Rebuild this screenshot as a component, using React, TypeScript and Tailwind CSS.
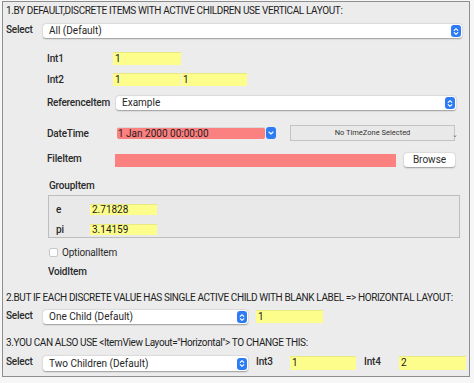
import React from "react";

const font = "font-['Roboto',_'Liberation_Sans',_sans-serif]";

function Stepper({ single = false }: { single?: boolean }) {
    return (
        <span className="flex h-[12px] w-[10px] shrink-0 items-center justify-center rounded-[3px] bg-[#2d7cf5]">
            {single ? (
                <svg width="6" height="4" viewBox="0 0 6 4" fill="none">
                    <path d="M1 1l2 2 2-2" stroke="white" strokeWidth="1.1" strokeLinecap="round" strokeLinejoin="round" />
                </svg>
            ) : (
                <svg width="6" height="9" viewBox="0 0 6 9" fill="none">
                    <path d="M1.2 3.3L3 1.6l1.8 1.7M1.2 5.7L3 7.4l1.8-1.7" stroke="white" strokeWidth="1.1" strokeLinecap="round" strokeLinejoin="round" />
                </svg>
            )}
        </span>
    );
}

function Select({ value, className }: { value: string; className: string }) {
    return (
        <div className={`flex h-[14px] items-center justify-between rounded-[3px] bg-white pl-[6px] pr-[1px] shadow-[0_0.5px_1.5px_rgba(0,0,0,0.35)] ${className}`}>
            <span className="text-[10px] leading-none text-[#262626]">{value}</span>
            <Stepper />
        </div>
    );
}

function Yellow({ value, className }: { value: string; className: string }) {
    return (
        <div className={`flex items-center bg-[#fdfd8c] pl-[2px] text-[10px] leading-none text-[#1a1a1a] shadow-[inset_0_1px_0_rgba(0,0,0,0.08)] ${className}`}>
            {value}
        </div>
    );
}

function Label({ children, className = "" }: { children: React.ReactNode; className?: string }) {
    return <span className={`text-[10px] font-medium leading-none tracking-[-0.2px] text-[#2a2a2a] ${className}`}>{children}</span>;
}

function Heading({ children, className = "" }: { children: React.ReactNode; className?: string }) {
    return (
        <div className={`flex items-center whitespace-nowrap text-[10px] leading-none tracking-[-0.38px] text-[#1e1e1e] ${className}`}>
            {children}
        </div>
    );
}

export default function App() {
    return (
        <div className={`h-[383px] w-[474px] overflow-hidden bg-[#f6f6f6] pl-[2px] pt-[1px] ${font}`}>
            <div className="flex h-[376px] w-[468px] flex-col border border-[#8e8e8e] bg-[#ececec] pl-[3px]">
                {/* Section 1 */}
                <Heading className="h-[17px]">1.BY DEFAULT,DISCRETE ITEMS WITH ACTIVE CHILDREN USE VERTICAL LAYOUT:</Heading>

                <div className="mt-[5px] flex h-[14px]">
                    <Label className="w-[37px] pt-[1px]">Select</Label>
                    <Select value="All (Default)" className="w-[419px]" />
                </div>

                <div className="ml-[41px] flex flex-col">
                    <div className="mt-[14px] flex h-[13px] items-center">
                        <Label className="w-[66px]">Int1</Label>
                        <Yellow value="1" className="h-[13px] w-[68px]" />
                    </div>

                    <div className="mt-[8px] flex h-[13px] items-center">
                        <Label className="w-[66px]">Int2</Label>
                        <Yellow value="1" className="h-[13px] w-[67px]" />
                        <Yellow value="1" className="ml-[1px] h-[13px] w-[66px]" />
                    </div>

                    <div className="mt-[10px] flex h-[14px] items-center">
                        <Label className="w-[69px]">ReferenceItem</Label>
                        <Select value="Example" className="w-[340px]" />
                    </div>

                    <div className="mt-[15px] flex h-[16px] items-center">
                        <Label className="w-[70px] pt-[2px]">DateTime</Label>
                        <div className="flex h-[12px] w-[148px] items-center rounded-[2px] border-t border-[#d9d9d9] bg-[#fb8181] pl-[1px] text-[10px] leading-none text-[#2a1a1a]">
                            1 Jan 2000 00:00:00
                        </div>
                        <span className="ml-[1px]">
                            <Stepper single />
                        </span>
                        <div className="relative ml-[14px] flex h-[16px] w-[165px] items-center justify-center border border-[#c4c4c4] bg-[#e9e9e9] text-[7.5px] leading-none text-[#333]">
                            No TimeZone Selected
                            <span className="absolute -right-[4px] bottom-[1px] text-[7px] leading-none text-[#666]">⌄</span>
                        </div>
                    </div>

                    <div className="mt-[12px] flex h-[15px]">
                        <Label className="w-[68px] pt-[1px]">FileItem</Label>
                        <div className="mt-[1px] h-[13px] w-[281px] bg-[#fb8181]" />
                        <div className="ml-[8px] flex h-[14px] w-[51px] items-center justify-center rounded-[3px] bg-white text-[10px] leading-none text-[#2a2a2a] shadow-[0_0.5px_1.5px_rgba(0,0,0,0.35)]">
                            Browse
                        </div>
                    </div>

                    <Label className="mt-[12px] ml-[2px] flex h-[12px] items-center">GroupItem</Label>

                    <div className="mt-[3px] ml-[1px] flex h-[43px] w-[412px] flex-col border border-[#bdbdbd] bg-[#e9e9e9] pl-[7px]">
                        <div className="mt-[8px] flex h-[11px] items-center">
                            <Label className="w-[34px]">e</Label>
                            <Yellow value="2.71828" className="h-[11px] w-[67px]" />
                        </div>
                        <div className="mt-[9px] flex h-[11px] items-center">
                            <Label className="w-[34px]">pi</Label>
                            <Yellow value="3.14159" className="h-[11px] w-[67px]" />
                        </div>
                    </div>

                    <div className="mt-[10px] flex h-[9px] items-center">
                        <span className="ml-[2px] h-[9px] w-[9px] rounded-[2px] border border-[#c8c8c8] bg-white" />
                        <Label className="ml-[4px] font-normal">OptionalItem</Label>
                    </div>

                    <Label className="mt-[10px] ml-[1px] flex h-[10px] items-center">VoidItem</Label>
                </div>

                {/* Section 2 */}
                <Heading className="mt-[15px] h-[12px]">
                    2.BUT IF EACH DISCRETE VALUE HAS SINGLE ACTIVE CHILD WITH BLANK LABEL =&gt; HORIZONTAL LAYOUT:
                </Heading>

                <div className="mt-[6px] flex h-[14px]">
                    <Label className="w-[37px] pt-[1px]">Select</Label>
                    <Select value="One Child (Default)" className="w-[205px]" />
                    <Yellow value="1" className="ml-[8px] h-[13px] w-[67px]" />
                </div>

                {/* Section 3 */}
                <Heading className="mt-[13px] h-[12px]">
                    3.YOU CAN ALSO USE &lt;ItemView Layout="Horizontal"&gt; TO CHANGE THIS:
                </Heading>

                <div className="mt-[7px] flex h-[15px]">
                    <Label className="w-[37px] pt-[1px]">Select</Label>
                    <Select value="Two Children (Default)" className="h-[15px] w-[205px]" />
                    <Label className="ml-[8px] w-[34px] pt-[1px]">Int3</Label>
                    <Yellow value="1" className="h-[14px] w-[66px]" />
                    <Label className="ml-[8px] w-[35px] pt-[1px]">Int4</Label>
                    <Yellow value="2" className="h-[14px] w-[67px]" />
                </div>
            </div>
        </div>
    );
}
